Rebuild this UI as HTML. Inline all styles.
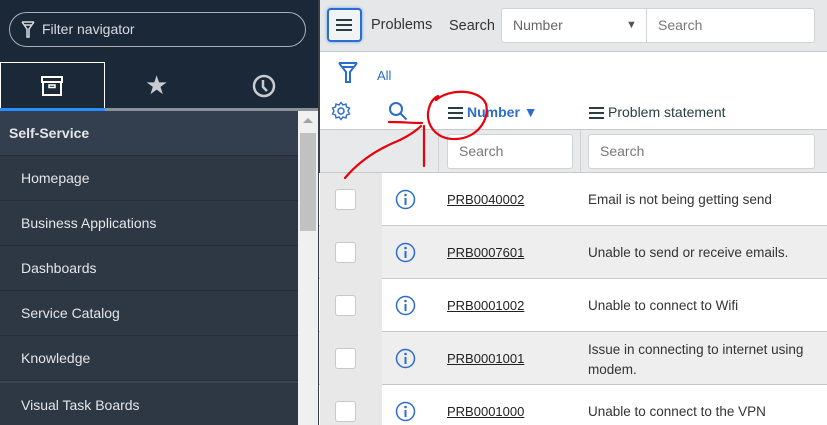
<!DOCTYPE html><html><head><style>
*{box-sizing:border-box;margin:0;padding:0}
html,body{width:827px;height:425px;overflow:hidden}
body{position:relative;font-family:"Liberation Sans",sans-serif;background:#fff}
.a{position:absolute}
.nav{left:0;top:0;width:319px;height:425px;background:#2e3744}
.item{position:absolute;left:0;width:298px;height:45px;border-bottom:1px solid #262e38;color:#e4e6e9;font-size:14px;padding-left:21px;line-height:45px}
.row{position:absolute;left:319px;width:508px;height:53px;border-bottom:1px solid #c8c8c8}
.cb{position:absolute;left:16px;width:21px;height:21px;background:#fff;border:1px solid #c9c9c9;border-radius:3px}
.inp{position:absolute;background:#fff;border:1px solid #cfd3d6;border-radius:3px;color:#666;font-size:14px;padding-left:11px}
</style></head><body>
<div class="a nav"></div>
<div class="a" style="left:0;top:0;width:319px;height:62px;background:#1b2838"></div>
<div class="a" style="left:9px;top:12px;width:297px;height:35px;border:1px solid #aab0b8;border-radius:18px;color:#d8dce0;font-size:14px;line-height:33px;padding-left:32px">Filter navigator
<svg class="a" style="left:11px;top:7px" width="14" height="20" viewBox="0 0 14 20"><path d="M1 2h12M1 2l5 7v8h2V9l5-7M3 5h8" stroke="#d8dce0" fill="none" stroke-width="1.5"/></svg></div>
<div class="a" style="left:0;top:62px;width:319px;height:46px;background:#1b2838"></div>
<div class="a" style="left:0;top:62px;width:105px;height:46px;border:1px solid #fff;border-bottom:none"></div>
<div class="a" style="left:0;top:108px;width:105px;height:3px;background:#278efc"></div>
<div class="a" style="left:105px;top:108px;width:214px;height:3px;background:#8a9199"></div>
<svg class="a" style="left:40px;top:75px" width="24" height="22" viewBox="0 0 24 22"><rect x="2" y="2" width="20" height="5" fill="none" stroke="#fff" stroke-width="2"/><rect x="3" y="7" width="18" height="13" fill="none" stroke="#fff" stroke-width="2"/><rect x="9" y="10" width="6" height="2.5" fill="none" stroke="#fff" stroke-width="1.5"/></svg>
<div class="a" style="left:145px;top:70px;color:#c8ccd0;font-size:26px">★</div>
<svg class="a" style="left:252px;top:74px" width="24" height="24"><circle cx="12" cy="12" r="10" fill="none" stroke="#c8ccd0" stroke-width="2.5"/><path d="M11 6v7l4 4" stroke="#c8ccd0" stroke-width="2.5" fill="none"/></svg>
<div class="item" style="top:111px;background:#333f4e;font-weight:bold;padding-left:9px">Self-Service</div>
<div class="item" style="top:156px">Homepage</div>
<div class="item" style="top:201px">Business Applications</div>
<div class="item" style="top:246px">Dashboards</div>
<div class="item" style="top:291px">Service Catalog</div>
<div class="item" style="top:336px">Knowledge</div>
<div class="item" style="top:381px;border-top:2px solid #3a4656">Visual Task Boards</div>
<div class="a" style="left:298px;top:111px;width:20px;height:314px;background:#f0f0f0"></div>
<div class="a" style="left:300px;top:133px;width:16px;height:98px;background:#c1c1c1"></div>
<div class="a" style="left:303px;top:118px;width:0;height:0;border:5px solid transparent;border-bottom:5px solid #a3a3a3;border-top:none"></div>
<div class="a" style="left:318px;top:0;width:2px;height:425px;background:#3a3f47"></div>
<div class="a" style="left:320px;top:0;width:507px;height:52px;background:#e6e7e9;border-bottom:1px solid #c8c9cb"></div>
<div class="a" style="left:327px;top:8px;width:35px;height:34px;border:2px solid #2b6dcc;border-radius:4px;background:#f2f3f5;box-shadow:0 0 3px #6aa5f0"></div>
<svg class="a" style="left:336px;top:18px" width="16" height="14"><path d="M0 2h16M0 7h16M0 12h16" stroke="#293e40" stroke-width="2"/></svg>
<div class="a" style="left:371px;top:17px;font-size:14.5px;color:#333">Problems</div>
<div class="a" style="left:449px;top:18px;font-size:14.5px;color:#333">Search</div>
<div class="inp" style="left:501px;top:8px;width:146px;height:35px;line-height:33px;border-radius:3px 0 0 3px">Number<span class="a" style="left:124px;top:0;font-size:11px;color:#555">▼</span></div>
<div class="inp" style="left:646px;top:8px;width:169px;height:35px;line-height:33px;color:#777;border-radius:0 3px 3px 0">Search</div>
<svg class="a" style="left:337px;top:61px" width="22" height="24" viewBox="0 0 22 24"><path d="M2 2h18M2 2l7 9v10h4V11l7-9M5 6h12" stroke="#2b6dcc" fill="none" stroke-width="2"/></svg>
<div class="a" style="left:377px;top:68px;font-size:13px;color:#2b6dcc">All</div>
<svg class="a" style="left:331px;top:101px" width="20" height="20" viewBox="0 0 20 20"><circle cx="10" cy="10" r="3" fill="none" stroke="#2b6dcc" stroke-width="1.5"/><path d="M10 1.5l2 2.5 3-1 .5 3 3 1-1.5 3 1.5 3-3 1-.5 3-3-1-2 2.5-2-2.5-3 1-.5-3-3-1L3 10 1.5 7l3-1 .5-3 3 1z" fill="none" stroke="#2b6dcc" stroke-width="1.4"/></svg>
<svg class="a" style="left:388px;top:101px" width="22" height="22"><circle cx="8" cy="8" r="6" fill="none" stroke="#2b6dcc" stroke-width="2"/><path d="M12.5 12.5l6 6" stroke="#2b6dcc" stroke-width="2"/></svg>
<svg class="a" style="left:448px;top:107px" width="15" height="12"><path d="M0 1h15M0 6h15M0 11h15" stroke="#293e40" stroke-width="2"/></svg>
<div class="a" style="left:467px;top:104px;font-size:14px;color:#2b6dcc;font-weight:bold">Number ▼</div>
<svg class="a" style="left:589px;top:107px" width="15" height="12"><path d="M0 1h15M0 6h15M0 11h15" stroke="#293e40" stroke-width="2"/></svg>
<div class="a" style="left:608px;top:104px;font-size:14px;color:#293e40">Problem statement</div>
<div class="a" style="left:320px;top:129px;width:507px;height:44px;background:#e8e9ea;border-top:1px solid #c8c9cb;border-bottom:1px solid #c8c9cb"></div>
<div class="a" style="left:438px;top:130px;width:1px;height:42px;background:#d0d0d0"></div>
<div class="a" style="left:580px;top:130px;width:1px;height:42px;background:#d0d0d0"></div>
<div class="inp" style="left:447px;top:134px;width:126px;height:35px;line-height:33px;color:#777">Search</div>
<div class="inp" style="left:588px;top:134px;width:227px;height:35px;line-height:33px;color:#777">Search</div>
<div class="row" style="top:173px;background:#fff"></div>
<div class="row" style="top:226px;background:#eeeeee"></div>
<div class="row" style="top:279px;background:#fff"></div>
<div class="row" style="top:332px;background:#eeeeee"></div>
<div class="row" style="top:385px;background:#fff"></div>
<div class="a" style="left:320px;top:173px;width:62px;height:252px;background:#e8e8e8"></div>
<div id="rows"></div>
<script>
var d=[["PRB0040002","Email is not being getting send"],["PRB0007601","Unable to send or receive emails."],["PRB0001002","Unable to connect to Wifi"],["PRB0001001","Issue in connecting to internet using<br>modem."],["PRB0001000","Unable to connect to the VPN"]];
var h="";d.forEach(function(r,i){var t=173+i*53;
h+='<div class="cb a" style="left:335px;top:'+(t+16)+'px"></div>';
h+='<svg class="a" style="left:395px;top:'+(t+16)+'px" width="21" height="21"><circle cx="10.5" cy="10.5" r="9" fill="none" stroke="#2b6dcc" stroke-width="1.5"/><circle cx="10.5" cy="6" r="1.3" fill="#2b6dcc"/><path d="M10.5 9v7" stroke="#2b6dcc" stroke-width="2"/></svg>';
h+='<div class="a" style="left:447px;top:'+(t+19)+'px;font-size:13px;color:#222;text-decoration:underline">'+r[0]+'</div>';
h+='<div class="a" style="left:588px;top:'+(i==3?t+8:t+19)+'px;font-size:13.5px;color:#333;line-height:'+(i==3?'20px':'16px')+'">'+r[1]+'</div>';});
document.getElementById("rows").innerHTML=h;
</script>
<svg class="a" style="left:0;top:0" width="827" height="425"><g fill="none" stroke="#e8000a" stroke-width="2.2" stroke-linecap="round"><path d="M436 100c14-12 44-11 50 4 4 16-9 34-30 35-18 1-29-12-28-26 1-8 4-14 10-17"/><path d="M389 122c12 0 24 1 33 1"/><path d="M424 126v40"/><path d="M345 178c15-18 35-30 55-38 10-5 17-10 21-14"/></g></svg>
</body></html>
